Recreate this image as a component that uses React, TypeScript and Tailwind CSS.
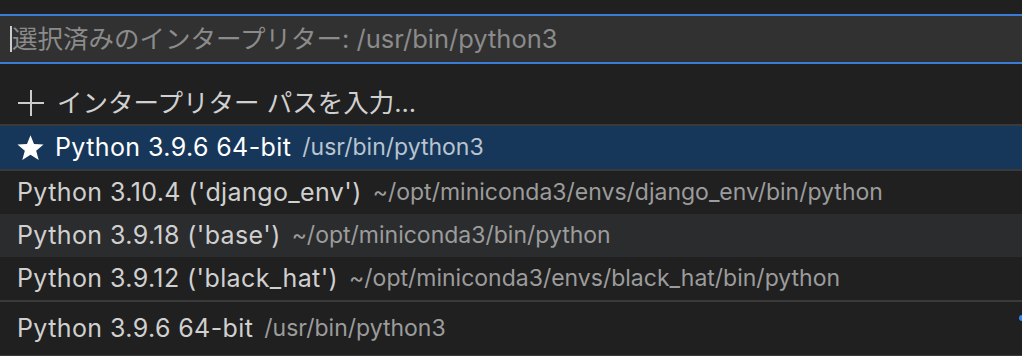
type Item = {
  label: string
  detail: string
  star?: boolean
  selected?: boolean
  hover?: boolean
}

const items: Item[] = [
  { label: 'Python 3.9.6 64-bit', detail: '/usr/bin/python3', star: true, selected: true },
  { label: "Python 3.10.4 ('django_env')", detail: '~/opt/miniconda3/envs/django_env/bin/python' },
  { label: "Python 3.9.18 ('base')", detail: '~/opt/miniconda3/bin/python', hover: true },
  { label: "Python 3.9.12 ('black_hat')", detail: '~/opt/miniconda3/envs/black_hat/bin/python' },
]

const font = { fontFamily: 'Inter, "Noto Sans CJK JP", sans-serif' }

function Row({ item }: { item: Item }) {
  const bg = item.selected ? 'bg-[#17375a]' : item.hover ? 'bg-[#2b2c2e]' : 'bg-[#202020]'
  return (
    <div className={`flex items-center h-[43px] pl-[17px] whitespace-nowrap ${bg}`}>
      {item.star && (
        <svg width="29" height="29" viewBox="0 0 24 24" className="mr-[10px] -ml-[1px]">
          <path fill="#ffffff" d="M12 1.8l2.9 7.4 7.9.4-6.1 5 2.1 7.7L12 18l-6.8 4.3 2.1-7.7-6.1-5 7.9-.4z" />
        </svg>
      )}
      <span className={`text-[25px] tracking-[0.4px] ${item.selected ? 'text-white' : 'text-[#d0d0d0]'}`}>
        {item.label}
      </span>
      <span className={`ml-[11px] text-[23px] ${item.selected ? 'text-[#b9c4d0]' : 'text-[#9c9c9c]'}`}>
        {item.detail}
      </span>
    </div>
  )
}

export default function App() {
  return (
    <div className="w-[1022px] h-[356px] bg-[#202020] overflow-hidden" style={font}>
      <div className="h-[14px]" />
      <div className="h-[50px] bg-[#313131] border-y-2 border-[#3a7bd5] flex items-center pl-[10px] whitespace-nowrap">
        <div className="w-[2px] h-[26px] bg-[#cccccc]" />
        <span className="text-[25.5px] text-[#8b8b8b]">選択済みのインタープリター: /usr/bin/python3</span>
      </div>

      <div className="h-[60px] flex items-end pb-[2px] pl-[18px]">
        <div className="flex items-center h-[38px] whitespace-nowrap">
          <svg width="26" height="26" viewBox="0 0 26 26" className="mr-[13px]">
            <path d="M13 0v26M0 13h26" stroke="#cccccc" strokeWidth="2" />
          </svg>
          <span className="text-[25.5px] text-[#d0d0d0]">インタープリター パスを入力...</span>
        </div>
      </div>

      <div className="h-[2px] bg-[#3a3a3a]" />
      <Row item={items[0]} />
      <div className="h-[2px] bg-[#3a3a3a]" />
      <Row item={items[1]} />
      <Row item={items[2]} />
      <Row item={items[3]} />
      <div className="h-[2px] bg-[#3a3a3a]" />
      <div className="flex items-center h-[53px] pl-[17px] relative whitespace-nowrap">
        <span className="text-[25px] tracking-[0.4px] text-[#d0d0d0]">Python 3.9.6 64-bit</span>
        <span className="ml-[11px] text-[23px] text-[#9c9c9c]">/usr/bin/python3</span>
        <span className="absolute right-0 top-[13px] w-[3px] h-[6px] bg-[#3b82f6] rounded-l-sm" />
      </div>
      <div className="h-[2px] bg-[#3a3a3a]" />
    </div>
  )
}
